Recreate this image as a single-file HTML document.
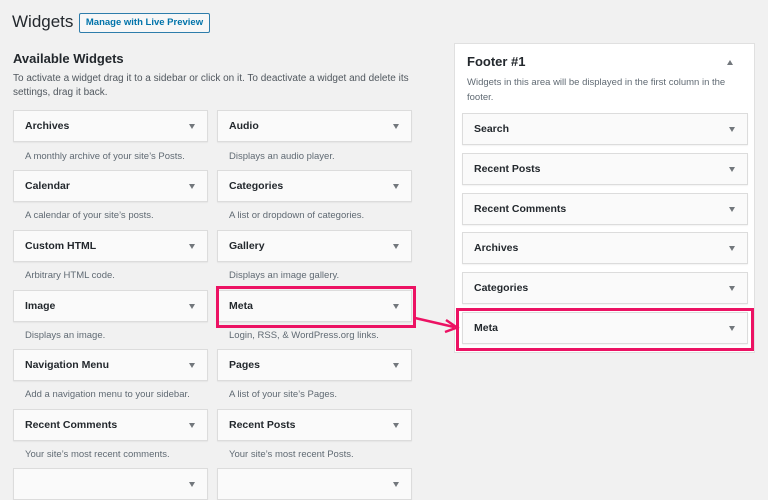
<!DOCTYPE html>
<html><head><meta charset="utf-8"><style>
*{margin:0;padding:0;box-sizing:border-box}
body{width:768px;height:472px;overflow:hidden;background:#f1f1f1;font-family:"Liberation Sans",sans-serif;color:#23282d;position:relative}
.a{position:absolute}
.w{position:absolute;width:195px;height:32px;background:#fafafa;border:1px solid #dcdcdc;box-shadow:0 1px 1px rgba(0,0,0,.05);font-weight:bold;font-size:10.5px;line-height:30px;padding-left:11px}
.w:after{content:"";position:absolute;right:12px;top:13px;border-left:3px solid transparent;border-right:3px solid transparent;border-top:5px solid #72777c}
.d{position:absolute;font-size:9.5px;color:#606a73}
.r{width:286px;left:462px}
.pink{position:absolute;border:3px solid #ec1263}
</style></head><body>
<div class="a" style="left:12px;top:12px;font-size:17px;color:#23282d">Widgets</div>
<div class="a" style="left:79px;top:13px;width:131px;height:20px;border:1px solid #2e7dab;background:#f7f7f7;color:#0073aa;font-size:9.5px;font-weight:bold;line-height:18px;text-align:center;border-radius:2px">Manage with Live Preview</div>
<div class="a" style="left:13px;top:51px;font-size:13px;font-weight:bold">Available Widgets</div>
<div class="a" style="left:13px;top:72px;font-size:10px;line-height:14px;color:#50575e;width:410px">To activate a widget drag it to a sidebar or click on it. To deactivate a widget and delete its settings, drag it back.</div>

<div class="w" style="left:13px;top:110px">Archives</div><div class="w" style="left:217px;top:110px">Audio</div>
<div class="d" style="left:25px;top:151px">A monthly archive of your site’s Posts.</div><div class="d" style="left:229px;top:151px">Displays an audio player.</div>
<div class="w" style="left:13px;top:170px">Calendar</div><div class="w" style="left:217px;top:170px">Categories</div>
<div class="d" style="left:25px;top:210px">A calendar of your site’s posts.</div><div class="d" style="left:229px;top:210px">A list or dropdown of categories.</div>
<div class="w" style="left:13px;top:230px">Custom HTML</div><div class="w" style="left:217px;top:230px">Gallery</div>
<div class="d" style="left:25px;top:270px">Arbitrary HTML code.</div><div class="d" style="left:229px;top:270px">Displays an image gallery.</div>
<div class="w" style="left:13px;top:290px">Image</div><div class="w" style="left:217px;top:290px">Meta</div>
<div class="d" style="left:25px;top:330px">Displays an image.</div><div class="d" style="left:229px;top:330px">Login, RSS, &amp; WordPress.org links.</div>
<div class="w" style="left:13px;top:349px">Navigation Menu</div><div class="w" style="left:217px;top:349px">Pages</div>
<div class="d" style="left:25px;top:389px">Add a navigation menu to your sidebar.</div><div class="d" style="left:229px;top:389px">A list of your site’s Pages.</div>
<div class="w" style="left:13px;top:409px">Recent Comments</div><div class="w" style="left:217px;top:409px">Recent Posts</div>
<div class="d" style="left:25px;top:449px">Your site’s most recent comments.</div><div class="d" style="left:229px;top:449px">Your site’s most recent Posts.</div>
<div class="w" style="left:13px;top:468px"></div><div class="w" style="left:217px;top:468px"></div>

<div class="a" style="left:454px;top:43px;width:301px;height:310px;background:#fff;border:1px solid #e0e0e0"></div>
<div class="a" style="left:467px;top:54px;font-size:13px;font-weight:bold">Footer #1</div>
<div class="a" style="left:727px;top:60px;border-left:3px solid transparent;border-right:3px solid transparent;border-bottom:5px solid #72777c"></div>
<div class="a" style="left:467px;top:75px;font-size:9.5px;line-height:15px;color:#606a73;width:280px">Widgets in this area will be displayed in the first column in the footer.</div>
<div class="w r" style="top:113px">Search</div>
<div class="w r" style="top:153px">Recent Posts</div>
<div class="w r" style="top:193px">Recent Comments</div>
<div class="w r" style="top:232px">Archives</div>
<div class="w r" style="top:272px">Categories</div>
<div class="w r" style="top:312px">Meta</div>

<div class="pink" style="left:216px;top:286px;width:200px;height:42px"></div>
<div class="pink" style="left:456px;top:308px;width:298px;height:43px"></div>
<svg class="a" style="left:410px;top:314px" width="52" height="22"><line x1="5" y1="4" x2="44" y2="13" stroke="#ec1263" stroke-width="2.5"/><path d="M36 6 L47 13.5 L35 18" fill="none" stroke="#ec1263" stroke-width="2.5"/></svg>
</body></html>
